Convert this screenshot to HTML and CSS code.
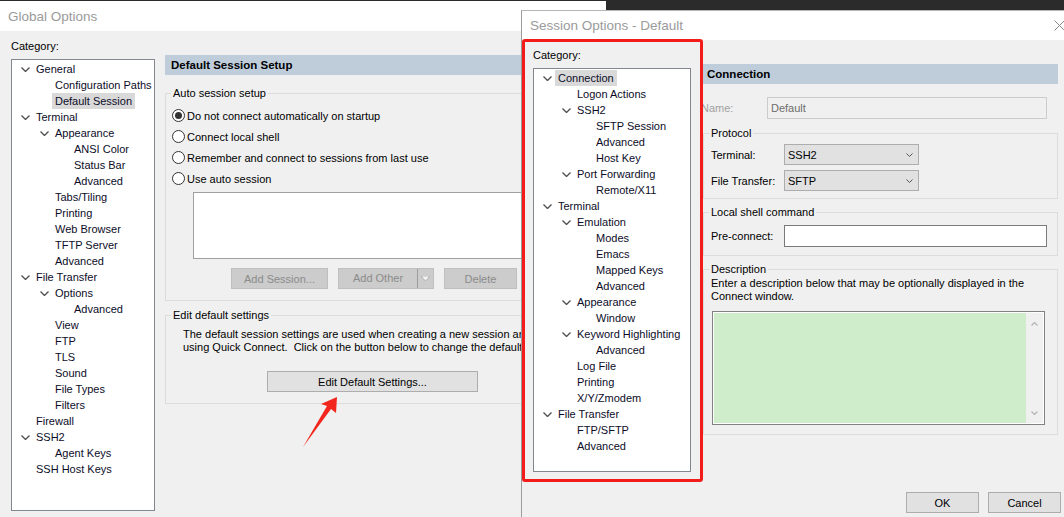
FILE: index.html
```html
<!DOCTYPE html>
<html>

<head>
    <meta charset="utf-8">
    <link rel="stylesheet" href="styles.css">
    <title>Global Options</title>
</head>

<body>
    <div class="desktop">

        <!-- Global Options window (behind) -->
        <div class="window global-window">
            <div class="titlebar"><span class="title">Global Options</span></div>
            <div class="window-body">
                <div class="category-col global-col">
                    <div class="caption">Category:</div>
                    <ul class="tree global-tree">
                        <li class="l0"><span class="twisty"><svg width="9" height="5" viewBox="0 0 9 5"><path d="M0.5 0.5 L4.5 4.5 L8.5 0.5"/></svg></span><span class="node">General</span></li>
                        <li class="l1"><span class="twisty"></span><span class="node">Configuration Paths</span></li>
                        <li class="l1"><span class="twisty"></span><span class="node selected">Default Session</span></li>
                        <li class="l0"><span class="twisty"><svg width="9" height="5" viewBox="0 0 9 5"><path d="M0.5 0.5 L4.5 4.5 L8.5 0.5"/></svg></span><span class="node">Terminal</span></li>
                        <li class="l1"><span class="twisty"><svg width="9" height="5" viewBox="0 0 9 5"><path d="M0.5 0.5 L4.5 4.5 L8.5 0.5"/></svg></span><span class="node">Appearance</span></li>
                        <li class="l2"><span class="twisty"></span><span class="node">ANSI Color</span></li>
                        <li class="l2"><span class="twisty"></span><span class="node">Status Bar</span></li>
                        <li class="l2"><span class="twisty"></span><span class="node">Advanced</span></li>
                        <li class="l1"><span class="twisty"></span><span class="node">Tabs/Tiling</span></li>
                        <li class="l1"><span class="twisty"></span><span class="node">Printing</span></li>
                        <li class="l1"><span class="twisty"></span><span class="node">Web Browser</span></li>
                        <li class="l1"><span class="twisty"></span><span class="node">TFTP Server</span></li>
                        <li class="l1"><span class="twisty"></span><span class="node">Advanced</span></li>
                        <li class="l0"><span class="twisty"><svg width="9" height="5" viewBox="0 0 9 5"><path d="M0.5 0.5 L4.5 4.5 L8.5 0.5"/></svg></span><span class="node">File Transfer</span></li>
                        <li class="l1"><span class="twisty"><svg width="9" height="5" viewBox="0 0 9 5"><path d="M0.5 0.5 L4.5 4.5 L8.5 0.5"/></svg></span><span class="node">Options</span></li>
                        <li class="l2"><span class="twisty"></span><span class="node">Advanced</span></li>
                        <li class="l1"><span class="twisty"></span><span class="node">View</span></li>
                        <li class="l1"><span class="twisty"></span><span class="node">FTP</span></li>
                        <li class="l1"><span class="twisty"></span><span class="node">TLS</span></li>
                        <li class="l1"><span class="twisty"></span><span class="node">Sound</span></li>
                        <li class="l1"><span class="twisty"></span><span class="node">File Types</span></li>
                        <li class="l1"><span class="twisty"></span><span class="node">Filters</span></li>
                        <li class="l0"><span class="twisty"></span><span class="node">Firewall</span></li>
                        <li class="l0"><span class="twisty"><svg width="9" height="5" viewBox="0 0 9 5"><path d="M0.5 0.5 L4.5 4.5 L8.5 0.5"/></svg></span><span class="node">SSH2</span></li>
                        <li class="l1"><span class="twisty"></span><span class="node">Agent Keys</span></li>
                        <li class="l0"><span class="twisty"></span><span class="node">SSH Host Keys</span></li>
                    </ul>
                </div>

                <div class="page global-page">
                    <div class="page-header">Default Session Setup</div>

                    <fieldset class="group auto-group">
                        <legend>Auto session setup</legend>
                        <div class="radio-row first"><span class="radio checked"></span>Do not connect automatically on startup</div>
                        <div class="radio-row"><span class="radio"></span>Connect local shell</div>
                        <div class="radio-row"><span class="radio"></span>Remember and connect to sessions from last use</div>
                        <div class="radio-row"><span class="radio"></span>Use auto session</div>
                        <div class="session-list"></div>
                        <div class="button-row">
                            <button class="btn disabled add-session">Add Session...</button>
                            <button class="btn disabled split">
                                <span class="split-label">Add Other</span>
                                <span class="split-arrow"><svg width="9" height="5" viewBox="0 0 9 5"><path d="M0 0 H9 L4.5 5 Z"/></svg></span>
                            </button>
                            <button class="btn disabled delete">Delete</button>
                        </div>
                    </fieldset>

                    <fieldset class="group edit-group">
                        <legend>Edit default settings</legend>
                        <p class="note">The default session settings are used when creating a new session and when
using Quick Connect.  Click on the button below to change the default settings.</p>
                        <button class="btn edit-btn">Edit Default Settings...</button>
                    </fieldset>
                </div>
            </div>
        </div>

        <!-- Session Options window (front) -->
        <div class="window session-window">
            <div class="titlebar">
                <span class="title">Session Options - Default</span>
                <svg class="close" width="11" height="11" viewBox="0 0 11 11"><path d="M0.5 0.5 L10.5 10.5 M10.5 0.5 L0.5 10.5"/></svg>
            </div>
            <div class="window-body column">
                <div class="body-row">
                    <div class="category-col session-col">
                        <div class="caption">Category:</div>
                        <ul class="tree session-tree">
                            <li class="l0"><span class="twisty"><svg width="9" height="5" viewBox="0 0 9 5"><path d="M0.5 0.5 L4.5 4.5 L8.5 0.5"/></svg></span><span class="node selected">Connection</span></li>
                            <li class="l1"><span class="twisty"></span><span class="node">Logon Actions</span></li>
                            <li class="l1"><span class="twisty"><svg width="9" height="5" viewBox="0 0 9 5"><path d="M0.5 0.5 L4.5 4.5 L8.5 0.5"/></svg></span><span class="node">SSH2</span></li>
                            <li class="l2"><span class="twisty"></span><span class="node">SFTP Session</span></li>
                            <li class="l2"><span class="twisty"></span><span class="node">Advanced</span></li>
                            <li class="l2"><span class="twisty"></span><span class="node">Host Key</span></li>
                            <li class="l1"><span class="twisty"><svg width="9" height="5" viewBox="0 0 9 5"><path d="M0.5 0.5 L4.5 4.5 L8.5 0.5"/></svg></span><span class="node">Port Forwarding</span></li>
                            <li class="l2"><span class="twisty"></span><span class="node">Remote/X11</span></li>
                            <li class="l0"><span class="twisty"><svg width="9" height="5" viewBox="0 0 9 5"><path d="M0.5 0.5 L4.5 4.5 L8.5 0.5"/></svg></span><span class="node">Terminal</span></li>
                            <li class="l1"><span class="twisty"><svg width="9" height="5" viewBox="0 0 9 5"><path d="M0.5 0.5 L4.5 4.5 L8.5 0.5"/></svg></span><span class="node">Emulation</span></li>
                            <li class="l2"><span class="twisty"></span><span class="node">Modes</span></li>
                            <li class="l2"><span class="twisty"></span><span class="node">Emacs</span></li>
                            <li class="l2"><span class="twisty"></span><span class="node">Mapped Keys</span></li>
                            <li class="l2"><span class="twisty"></span><span class="node">Advanced</span></li>
                            <li class="l1"><span class="twisty"><svg width="9" height="5" viewBox="0 0 9 5"><path d="M0.5 0.5 L4.5 4.5 L8.5 0.5"/></svg></span><span class="node">Appearance</span></li>
                            <li class="l2"><span class="twisty"></span><span class="node">Window</span></li>
                            <li class="l1"><span class="twisty"><svg width="9" height="5" viewBox="0 0 9 5"><path d="M0.5 0.5 L4.5 4.5 L8.5 0.5"/></svg></span><span class="node">Keyword Highlighting</span></li>
                            <li class="l2"><span class="twisty"></span><span class="node">Advanced</span></li>
                            <li class="l1"><span class="twisty"></span><span class="node">Log File</span></li>
                            <li class="l1"><span class="twisty"></span><span class="node">Printing</span></li>
                            <li class="l1"><span class="twisty"></span><span class="node">X/Y/Zmodem</span></li>
                            <li class="l0"><span class="twisty"><svg width="9" height="5" viewBox="0 0 9 5"><path d="M0.5 0.5 L4.5 4.5 L8.5 0.5"/></svg></span><span class="node">File Transfer</span></li>
                            <li class="l1"><span class="twisty"></span><span class="node">FTP/SFTP</span></li>
                            <li class="l1"><span class="twisty"></span><span class="node">Advanced</span></li>
                        </ul>
                    </div>

                    <div class="page session-page">
                        <div class="page-header">Connection</div>

                        <div class="field-row name-row">
                            <span class="field-label disabled-text">Name:</span>
                            <div class="textbox readonly">Default</div>
                        </div>

                        <fieldset class="group protocol-group">
                            <legend>Protocol</legend>
                            <div class="field-row combo-row first">
                                <span class="field-label">Terminal:</span>
                                <div class="combo"><span>SSH2</span><svg width="7" height="4" viewBox="0 0 7 4"><path d="M0.5 0.5 L3.5 3.5 L6.5 0.5"/></svg></div>
                            </div>
                            <div class="field-row combo-row">
                                <span class="field-label">File Transfer:</span>
                                <div class="combo"><span>SFTP</span><svg width="7" height="4" viewBox="0 0 7 4"><path d="M0.5 0.5 L3.5 3.5 L6.5 0.5"/></svg></div>
                            </div>
                        </fieldset>

                        <fieldset class="group shell-group">
                            <legend>Local shell command</legend>
                            <div class="field-row pre-row">
                                <span class="field-label">Pre-connect:</span>
                                <div class="textbox white"></div>
                            </div>
                        </fieldset>

                        <fieldset class="group desc-group">
                            <legend>Description</legend>
                            <p class="desc-text">Enter a description below that may be optionally displayed in the<br>Connect window.</p>
                            <div class="desc-box">
                                <div class="desc-area"></div>
                                <div class="scrollbar">
                                    <svg width="7" height="4" viewBox="0 0 7 4"><path d="M0.5 3.5 L3.5 0.5 L6.5 3.5"/></svg>
                                    <svg width="7" height="4" viewBox="0 0 7 4"><path d="M0.5 0.5 L3.5 3.5 L6.5 0.5"/></svg>
                                </div>
                            </div>
                        </fieldset>
                    </div>
                </div>

                <div class="footer">
                    <button class="btn footer-btn">OK</button>
                    <button class="btn footer-btn">Cancel</button>
                </div>
            </div>
        </div>

        <!-- screenshot annotations -->
        <div class="highlight-box"></div>
        <svg class="arrow" width="1064" height="517" viewBox="0 0 1064 517">
            <polygon points="303,447 327,406 321,404 337,397 336,413 331,409"/>
        </svg>
    </div>
</body>

</html>
```

FILE: styles.css
```css
* {
    box-sizing: border-box;
}

body {
    margin: 0;
    background-color: #2b2b2b;
    font-family: "Liberation Sans", Arial, sans-serif;
    font-size: 11px;
    color: #000;
}

.desktop {
    position: relative;
    width: 1064px;
    height: 517px;
    overflow: hidden;
}

/* windows sit on the desktop at their own places */
.window {
    position: absolute;
    display: flex;
    flex-direction: column;
    background-color: #f0f0f0;
    overflow: hidden;
}

.global-window {
    left: 0;
    top: 1px;
    width: 606px;
    height: 516px;
}

.session-window {
    left: 521px;
    top: 10px;
    width: 552px;
    height: 507px;
    border-left: 1px solid #9b9b9b;
    border-top: 1px solid #b5b5b5;
}

.titlebar {
    display: flex;
    align-items: center;
    justify-content: space-between;
    background-color: #fff;
    padding: 0 8px;
    flex-shrink: 0;
}

.global-window .titlebar {
    height: 30px;
}

.session-window .titlebar {
    height: 29px;
}

.title {
    font-size: 13.5px;
    color: #9a9a9a;
}

.close path {
    stroke: #8a8a8a;
    stroke-width: 1;
    fill: none;
}

.window-body {
    display: flex;
    padding: 7px 0 0 11px;
}

.window-body.column {
    flex-direction: column;
}

.body-row {
    display: flex;
}

.caption {
    height: 16px;
    line-height: 16px;
    margin-bottom: 5px;
}

.global-col {
    width: 144px;
}

.session-col {
    width: 158px;
}

/* tree views */
.tree {
    list-style: none;
    margin: 0;
    padding: 1px 0 0 0;
    background-color: #fff;
    border: 1px solid #828790;
    overflow: hidden;
}

.global-tree {
    height: 452px;
}

.session-tree {
    height: 404px;
}

.tree li {
    display: flex;
    align-items: center;
    height: 16px;
    white-space: nowrap;
}

.tree .l0 {
    padding-left: 5px;
}

.tree .l1 {
    padding-left: 24px;
}

.tree .l2 {
    padding-left: 43px;
}

.twisty {
    display: flex;
    align-items: center;
    justify-content: center;
    width: 16px;
    height: 16px;
    flex-shrink: 0;
}

.twisty path {
    fill: none;
    stroke: #4d4d4d;
    stroke-width: 1.3;
}

.node {
    padding: 0 3px;
    line-height: 16px;
    color: #0c0c28;
}

.node.selected {
    background-color: #d9d9d9;
}

/* right hand pages */
.page {
    margin-left: 10px;
    padding-top: 17px;
}

.global-page {
    width: 400px;
}

.session-page {
    width: 357px;
}

.page-header {
    height: 20px;
    line-height: 20px;
    padding-left: 6px;
    background-color: #bfcddb;
    font-size: 11.5px;
    font-weight: bold;
}

.group {
    margin: 0;
    padding: 0 0 0 5px;
    border: 1px solid #dcdcdc;
    min-width: 0;
}

.group legend {
    padding: 0 2px;
    height: 16px;
    line-height: 16px;
}

.auto-group {
    margin-top: 10px;
    padding-bottom: 11px;
}

.radio-row {
    display: flex;
    align-items: center;
    height: 21px;
    white-space: nowrap;
}

.radio-row.first {
    margin-top: 4px;
}

.radio {
    position: relative;
    width: 13px;
    height: 13px;
    margin: 0 2px 0 1px;
    border: 1px solid #333;
    border-radius: 50%;
    background-color: #fff;
}

.radio.checked::after {
    content: "";
    position: absolute;
    left: 2px;
    top: 2px;
    width: 7px;
    height: 7px;
    border-radius: 50%;
    background-color: #333;
}

.session-list {
    height: 67px;
    margin: 3px 0 0 22px;
    background-color: #fff;
    border: 1px solid #a0a0a0;
}

.button-row {
    display: flex;
    gap: 10px;
    margin-top: 9px;
    padding-left: 60px;
}

.btn {
    height: 21px;
    padding: 0;
    font-family: inherit;
    font-size: 11px;
    color: #000;
    background-color: #e1e1e1;
    border: 1px solid #adadad;
}

.btn.disabled {
    color: #8b8b8b;
    background-color: #cccccc;
    border-color: #bfbfbf;
}

.add-session {
    width: 97px;
}

.delete {
    width: 73px;
}

.split {
    display: flex;
    width: 96px;
}

.split-label {
    flex: 1;
    line-height: 19px;
    text-align: center;
}

.split-arrow {
    display: flex;
    align-items: center;
    justify-content: center;
    width: 16px;
    height: 19px;
    border-left: 1px solid #9c9c9c;
}

.split-arrow path {
    fill: #f4f4f4;
    stroke: #a8a8a8;
    stroke-width: 0.8;
}

.edit-group {
    margin-top: 6px;
    padding-bottom: 11px;
}

.note {
    margin: 5px 0 0 12px;
    line-height: 13px;
    white-space: pre;
}

.edit-btn {
    display: block;
    width: 211px;
    margin: 17px 0 0 96px;
}

/* session page fields */
.field-row {
    display: flex;
    align-items: center;
    white-space: nowrap;
}

.field-label {
    flex-shrink: 0;
}

.disabled-text {
    color: #a0a0a0;
}

.name-row {
    height: 22px;
    margin-top: 13px;
}

.name-row .field-label {
    width: 66px;
}

.textbox {
    height: 22px;
    line-height: 20px;
    padding-left: 3px;
}

.textbox.readonly {
    width: 280px;
    color: #6d6d6d;
    background-color: #f0f0f0;
    border: 1px solid #cccccc;
}

.textbox.white {
    width: 263px;
    background-color: #fff;
    border: 1px solid #7a7a7a;
}

.protocol-group,
.shell-group,
.desc-group {
    width: 355px;
    margin-left: 2px;
}

.protocol-group {
    margin-top: 6px;
    padding-bottom: 7px;
}

.combo-row {
    height: 21px;
    margin-top: 5px;
    padding-left: 2px;
}

.combo-row.first {
    margin-top: 3px;
}

.combo-row .field-label,
.pre-row .field-label {
    width: 73px;
}

.combo {
    display: flex;
    align-items: center;
    justify-content: space-between;
    width: 135px;
    height: 21px;
    padding: 0 5px 0 3px;
    background-color: #e1e1e1;
    border: 1px solid #adadad;
}

.combo path {
    fill: none;
    stroke: #555;
    stroke-width: 1;
}

.shell-group {
    margin-top: 5px;
    padding-bottom: 8px;
}

.pre-row {
    height: 22px;
    margin-top: 5px;
    padding-left: 2px;
}

.desc-group {
    margin-top: 5px;
    padding-bottom: 9px;
}

.desc-text {
    margin: 0 0 0 2px;
    line-height: 13px;
    white-space: nowrap;
}

.desc-box {
    display: flex;
    width: 333px;
    height: 114px;
    margin: 8px 0 0 3px;
    border: 1px solid #828282;
    padding: 1px;
    background-color: #fff;
}

.desc-area {
    flex: 1;
    background-color: #cfeccb;
}

.scrollbar {
    display: flex;
    flex-direction: column;
    align-items: center;
    justify-content: space-between;
    width: 17px;
    padding: 9px 0 8px 0;
    background-color: #f0f0f0;
}

.scrollbar path {
    fill: none;
    stroke: #b4b4b4;
    stroke-width: 1.2;
}

.footer {
    display: flex;
    justify-content: flex-end;
    gap: 9px;
    margin-top: 20px;
    padding-right: 12px;
}

.footer-btn {
    width: 73px;
}

/* red annotations drawn over the screenshot */
.highlight-box {
    position: absolute;
    left: 522px;
    top: 39px;
    width: 181px;
    height: 443px;
    border: 3px solid #f21d1a;
    border-radius: 3px;
}

.arrow {
    position: absolute;
    left: 0;
    top: 0;
    pointer-events: none;
}

.arrow polygon {
    fill: #f2261d;
}
```
